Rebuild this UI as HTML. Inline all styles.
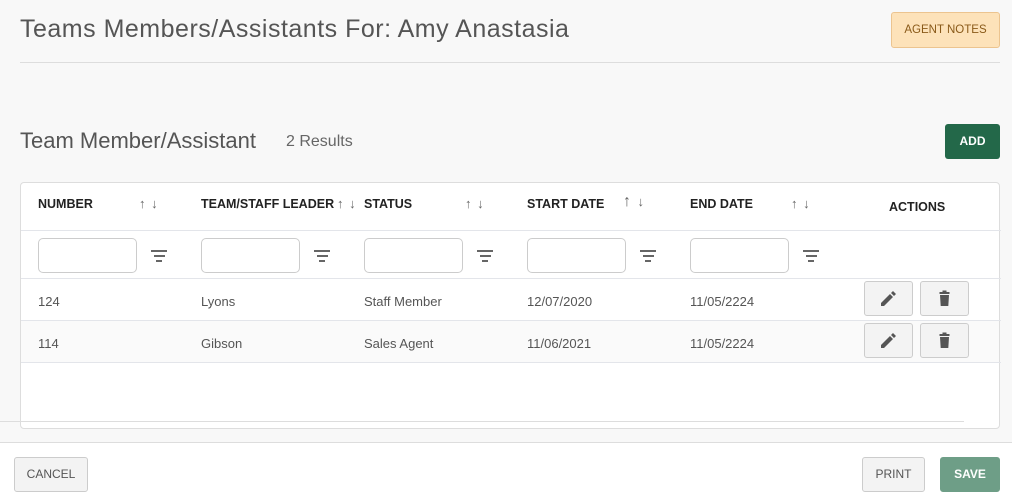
<!DOCTYPE html>
<html><head><style>
*{box-sizing:border-box;margin:0;padding:0}
body{width:1012px;height:503px;background:#f8f8f8;font-family:"Liberation Sans",sans-serif;position:relative;overflow:hidden;color:#333}
.abs{position:absolute}
.title{left:20px;top:15px;font-size:25px;font-weight:300;color:#555;letter-spacing:0.5px}
.hr{left:20px;top:62px;width:980px;height:1px;background:#ddd}
.notes{left:891px;top:12px;width:109px;height:36px;background:#fde2b9;border:1px solid #ecc48f;border-radius:3px;color:#8a5a19;font-size:11.5px;text-align:center;line-height:34px}
.sub{left:20px;top:128px;font-size:22px;font-weight:300;color:#555}
.res{left:286px;top:133px;font-size:16px;color:#666;font-weight:300}
.add{left:945px;top:124px;width:55px;height:35px;background:#236849;border-radius:3px;color:#fff;font-size:12px;font-weight:bold;text-align:center;line-height:35px}
.card{left:20px;top:182px;width:980px;height:247px;background:#fff;border:1px solid #ddd;border-radius:4px}
.line{height:1px;background:#e3e5ea;left:0;width:980px}
.th{top:14px;font-size:12.5px;font-weight:bold;color:#222}
.arr{top:13px;font-size:13px;color:#666;word-spacing:2px}
.inp{top:55px;width:99px;height:35px;border:1px solid #ccc;border-radius:5px}
.flt{top:67px;width:16px}
.flt i{display:block;height:2px;background:#666;margin:0 auto 3px}
.td{font-size:13px;color:#555}
.ab{width:49px;height:35px;border:1px solid #ccc;border-radius:3px;background:#f3f3f3}
.foot{left:0;top:442px;width:1012px;height:61px;background:#fff;border-top:1px solid #ddd}
.btn{top:457px;height:35px;border:1px solid #ccc;border-radius:3px;background:#f3f3f3;font-size:12px;color:#555;text-align:center;line-height:33px}
</style></head><body>
<div class="abs title">Teams Members/Assistants For: Amy Anastasia</div>
<div class="abs notes">AGENT NOTES</div>
<div class="abs hr"></div>
<div class="abs sub">Team Member/Assistant</div>
<div class="abs res">2 Results</div>
<div class="abs add">ADD</div>
<div class="abs card">
 <div class="abs th" style="left:17px">NUMBER</div><div class="abs arr" style="left:118px">↑ ↓</div>
 <div class="abs th" style="left:180px">TEAM/STAFF LEADER</div><div class="abs arr" style="left:316px">↑ ↓</div>
 <div class="abs th" style="left:343px">STATUS</div><div class="abs arr" style="left:444px">↑ ↓</div>
 <div class="abs th" style="left:506px">START DATE</div><div class="abs arr" style="left:602px;font-size:16px;top:10px">↑ <span style="font-size:13px">↓</span></div>
 <div class="abs th" style="left:669px">END DATE</div><div class="abs arr" style="left:770px">↑ ↓</div>
 <div class="abs th" style="left:868px;top:17px">ACTIONS</div>
 <div class="abs line" style="top:47px"></div>
 <div class="abs inp" style="left:17px"></div><div class="abs flt" style="left:130px"><i style="width:16px"></i><i style="width:11px"></i><i style="width:6px"></i></div>
 <div class="abs inp" style="left:180px"></div><div class="abs flt" style="left:293px"><i style="width:16px"></i><i style="width:11px"></i><i style="width:6px"></i></div>
 <div class="abs inp" style="left:343px"></div><div class="abs flt" style="left:456px"><i style="width:16px"></i><i style="width:11px"></i><i style="width:6px"></i></div>
 <div class="abs inp" style="left:506px"></div><div class="abs flt" style="left:619px"><i style="width:16px"></i><i style="width:11px"></i><i style="width:6px"></i></div>
 <div class="abs inp" style="left:669px"></div><div class="abs flt" style="left:782px"><i style="width:16px"></i><i style="width:11px"></i><i style="width:6px"></i></div>
 <div class="abs line" style="top:95px"></div>
 <div class="abs td" style="left:17px;top:111px">124</div><div class="abs td" style="left:180px;top:111px">Lyons</div><div class="abs td" style="left:343px;top:111px">Staff Member</div><div class="abs td" style="left:506px;top:111px">12/07/2020</div><div class="abs td" style="left:669px;top:111px">11/05/2224</div>
 <div class="abs line" style="top:137px"></div>
 <div class="abs" style="left:0;top:138px;width:978px;height:42px;background:#fafafa"></div>
 <div class="abs td" style="left:17px;top:153px">114</div><div class="abs td" style="left:180px;top:153px">Gibson</div><div class="abs td" style="left:343px;top:153px">Sales Agent</div><div class="abs td" style="left:506px;top:153px">11/06/2021</div><div class="abs td" style="left:669px;top:153px">11/05/2224</div>
 <div class="abs line" style="top:179px"></div>
 <div class="abs ab" style="left:843px;top:98px"><svg width="47" height="33" viewBox="0 0 47 33"><path d="M16 24v-3l9-9 3 3-9 9z M26 11l2-2 3 3-2 2z" fill="#555"/></svg></div>
 <div class="abs ab" style="left:899px;top:98px"><svg width="47" height="33" viewBox="0 0 47 33"><path d="M18.5 10h10v2h-10z M21.5 8.5h4v1.5h-4z M19 13h9l-.7 11h-7.6z" fill="#555"/></svg></div>
 <div class="abs ab" style="left:843px;top:140px"><svg width="47" height="33" viewBox="0 0 47 33"><path d="M16 24v-3l9-9 3 3-9 9z M26 11l2-2 3 3-2 2z" fill="#555"/></svg></div>
 <div class="abs ab" style="left:899px;top:140px"><svg width="47" height="33" viewBox="0 0 47 33"><path d="M18.5 10h10v2h-10z M21.5 8.5h4v1.5h-4z M19 13h9l-.7 11h-7.6z" fill="#555"/></svg></div>
 <div class="abs" style="left:0;top:238px;width:943px;height:1px;background:#ddd"></div>
</div>
<div class="abs" style="left:0;top:421px;width:20px;height:1px;background:#ddd"></div>
<div class="abs foot"></div>
<div class="abs btn" style="left:14px;width:74px">CANCEL</div>
<div class="abs btn" style="left:862px;width:63px">PRINT</div>
<div class="abs btn" style="left:940px;width:60px;background:#6e9e87;border-color:#6e9e87;color:#fff;font-weight:bold">SAVE</div>
</body></html>
